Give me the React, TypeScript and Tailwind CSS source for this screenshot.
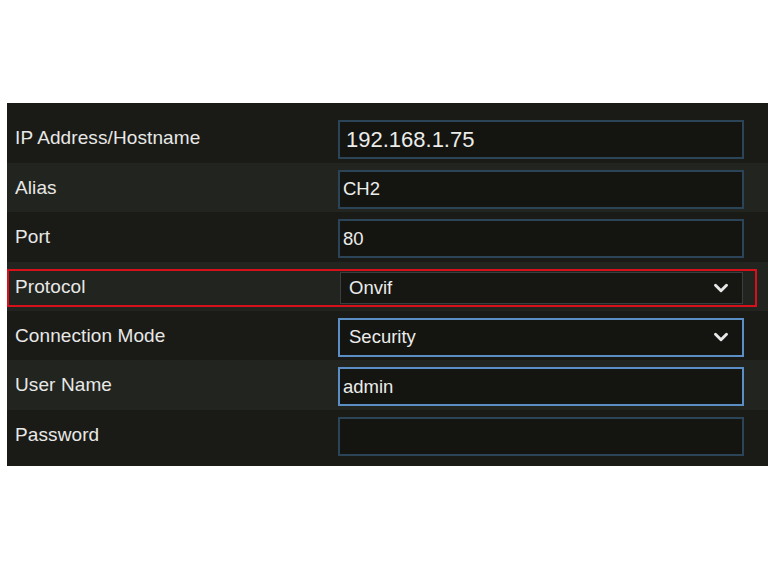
import { ChevronDown } from "lucide-react";

type Field = {
  label: string;
  value: string;
  kind: "text" | "select";
  active?: boolean;
  big?: boolean;
  highlight?: boolean;
};

const FIELDS: Field[] = [
  { label: "IP Address/Hostname", value: "192.168.1.75", kind: "text", big: true },
  { label: "Alias", value: "CH2", kind: "text" },
  { label: "Port", value: "80", kind: "text" },
  { label: "Protocol", value: "Onvif", kind: "select", highlight: true },
  { label: "Connection Mode", value: "Security", kind: "select", active: true },
  { label: "User Name", value: "admin", kind: "text", active: true },
  { label: "Password", value: "", kind: "text" },
];

const ROW_H = ["h-[50px]", "h-[49px]", "h-[50px]", "h-[49px]", "h-[49px]", "h-[50px]", "h-[49px]"];

export default function App() {
  return (
    <div className="w-[768px] h-[576px] bg-white overflow-hidden font-['Liberation_Sans',Arial,sans-serif]">
      <div className="mt-[103px] ml-[7px] h-[363px] bg-[#1a1b17] pt-[10px] flex flex-col">
        {FIELDS.map((f, i) => (
          <div
            key={f.label}
            className={`relative flex items-center ${ROW_H[i]} ${i % 2 === 1 ? "bg-[#222420]" : "bg-[#1a1b17]"}`}
          >
            <div className="w-[331px] pl-[8px] text-[19px] tracking-[0.1px] text-[#e8e8e6] pt-[1px]">{f.label}</div>
            {f.highlight ? (
              <div className="ml-[2px] w-[403px] h-[32px] mt-[2px] flex items-center justify-between border border-[#3a3e40] bg-[#161713] pl-[8px] pr-[10px]">
                <span className="text-[18.5px] text-[#ececea]">{f.value}</span>
                <ChevronDown size={22} strokeWidth={3.2} className="text-[#e8e8e8]" />
              </div>
            ) : (
              <div
                className={`w-[406px] h-[39px] mt-[3px] flex items-center justify-between bg-[#141511] pr-[10px] ${
                  f.active ? "border-2 border-[#5b8ec4]" : "border-2 border-[#2c4457]"
                } ${f.kind === "select" ? "pl-[9px]" : "pl-[3px]"}`}
              >
                <span className={`${f.big ? "text-[22px] pl-[3px]" : "text-[18.5px]"} text-[#ececea]`}>{f.value}</span>
                {f.kind === "select" && <ChevronDown size={22} strokeWidth={3.2} className="text-[#e8e8e8]" />}
              </div>
            )}
            {f.highlight && (
              <div className="absolute left-0 right-[11px] top-[7px] bottom-[4px] border-2 border-[#d8101c] pointer-events-none" />
            )}
          </div>
        ))}
      </div>
    </div>
  );
}
